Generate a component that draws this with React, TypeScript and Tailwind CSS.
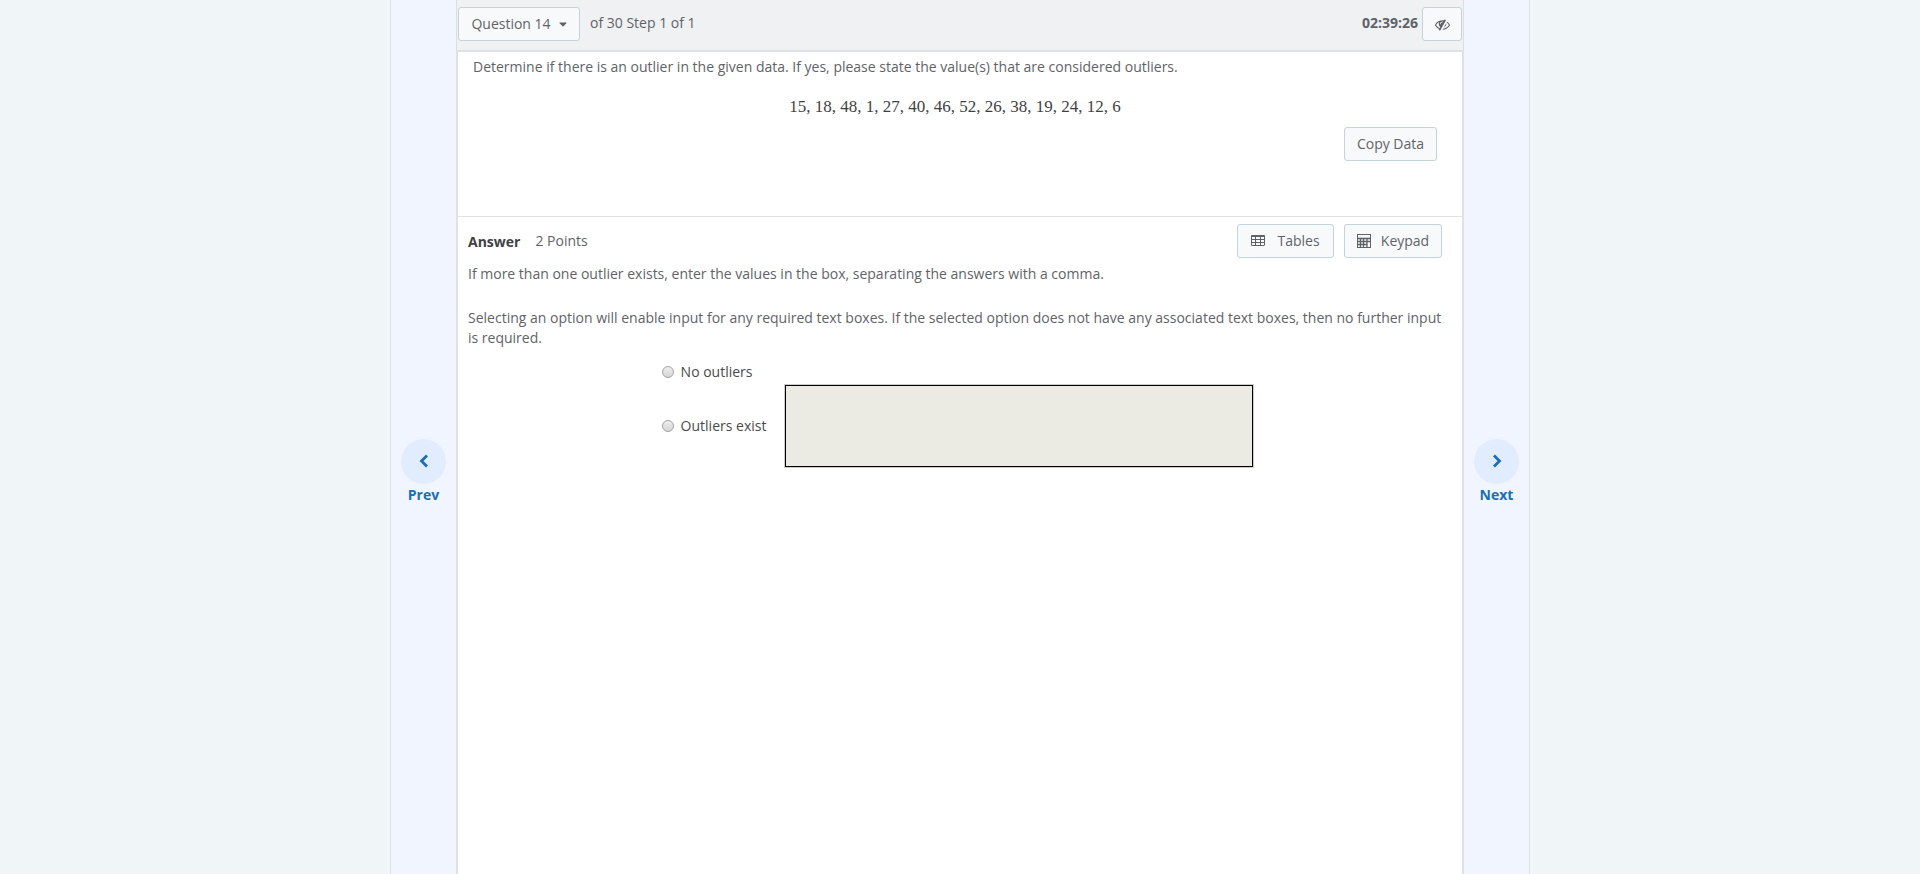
import React, { useState } from 'react';

const VALUES = [15, 18, 48, 1, 27, 40, 46, 52, 26, 38, 19, 24, 12, 6];

const EyeSlashIcon: React.FC = () => (
  <svg viewBox="0 0 1792 1792" className="mt-px h-[15px] w-[15px]" fill="currentColor" aria-hidden="true">
    <path d="M555 1335l78-141q-87-63-136-159t-49-203q0-121 61-225-229 117-381 353 167 258 427 375zm389-759q0-20-14-34t-34-14q-125 0-214.5 89.5t-89.5 214.5q0 20 14 34t34 14 34-14 14-34q0-86 61-147t147-61q20 0 34-14t14-34zm363-191q0 7-1 9-106 189-316 567t-315 566l-49 89q-10 16-28 16-12 0-134-70-16-10-16-28 0-12 44-87-143-65-263.5-173t-208.5-245q-20-31-20-69t20-69q153-235 380-371t496-136q89 0 180 17l54-97q10-16 28-16 5 0 18 6t31 15.5 33 18.5 31.5 18.5 19.5 11.5q16 10 16 27zm37 447q0 139-79 253.5t-209 164.5l280-502q8 45 8 84zm448 128q0 35-20 69-39 64-109 145-150 172-347.5 267t-419.5 95l74-132q212-18 392.5-137t301.5-307q-115-179-282-294l63-112q95 64 182.5 153t144.5 184q20 34 20 69z" />
  </svg>
);

const TableIcon: React.FC = () => (
  <svg viewBox="0 0 14 14" className="h-3.5 w-3.5" fill="none" stroke="currentColor" aria-hidden="true">
    <rect x="0.5" y="1.5" width="13" height="10" rx="0.5" />
    <path d="M0.5 2h13" strokeWidth="2" />
    <path d="M0.5 5.5h13M0.5 8.5h13M4.5 2v10M9.5 2v10" />
  </svg>
);

const KeypadIcon: React.FC = () => (
  <svg viewBox="0 0 14 14" className="h-3.5 w-3.5" fill="none" stroke="currentColor" aria-hidden="true">
    <rect x="0.5" y="0.5" width="13" height="13" />
    <path d="M0 4.5h14" strokeWidth="1.6" />
    <path d="M1 7.5h12M1 10.5h9M3.5 5v9M6.5 5v9M10 5v9" strokeWidth="1.3" />
  </svg>
);

interface ToolButtonProps {
  label?: string;
  ariaLabel?: string;
  className?: string;
  children?: React.ReactNode;
}

const ToolButton: React.FC<ToolButtonProps> = ({ label, ariaLabel, className = '', children }) => (
  <button
    type="button"
    aria-label={ariaLabel}
    className={`flex h-[34px] items-center justify-center rounded-[3px] border border-[#c3d3da] bg-[#f8f9fb] text-[#5f6368] ${className}`}
  >
    {children}
    {label}
  </button>
);

interface StepNavProps {
  label: string;
  direction: 'prev' | 'next';
}

const StepNav: React.FC<StepNavProps> = ({ label, direction }) => (
  <nav className="flex w-[65px] shrink-0 justify-center bg-[#f1f5ff]">
    <button type="button" className="mt-[439px] flex h-16 flex-col items-center font-bold text-[#1a6fb4]">
      <span className="flex h-[45px] w-[45px] shrink-0 items-center justify-center rounded-full bg-[#e1edff]">
        <svg viewBox="0 0 14 14" className="mb-0.5 h-3.5 w-3.5" fill="none" stroke="currentColor" strokeWidth="2.8" aria-hidden="true">
          <path d={direction === 'prev' ? 'M10 1.5L4.5 7l5.500 5.500' : 'M4 1.5L9.5 7L4 12.5'} />
        </svg>
      </span>
      <span className="leading-[22px]">{label}</span>
    </button>
  </nav>
);

interface OptionProps {
  id: string;
  label: string;
  checked: boolean;
  onSelect: () => void;
}

const Option: React.FC<OptionProps> = ({ id, label, checked, onSelect }) => (
  <label htmlFor={id} className="flex items-center gap-[7px] whitespace-nowrap text-[#4a4a4a]">
    <input
      id={id}
      type="radio"
      name="outliers"
      checked={checked}
      onChange={onSelect}
      className="h-3 w-3 appearance-none rounded-full border border-[#a3a3a3] bg-linear-to-b from-[#eeeeee] to-[#d6d6d6] checked:border-4 checked:border-[#555555]"
    />
    {label}
  </label>
);

const App: React.FC = () => {
  const [choice, setChoice] = useState('');

  return (
    <div className="min-h-screen bg-[#f0f5f8] font-['Open_Sans',sans-serif] text-sm text-[#5f6368]">
      <div className="mx-auto flex min-h-screen max-w-[1140px] border-x border-[#dcdfe2]">
        <StepNav label="Prev" direction="prev" />

        <main className="flex min-w-0 flex-1 flex-col">
          <header className="flex h-[50px] items-start border-x border-[#dcdfe2] bg-[#eff1f3] px-px pt-[7px]">
            <ToolButton label="Question 14" className="w-[122px] gap-2">
              <svg viewBox="0 0 8 5" className="order-last h-[5px] w-2" fill="currentColor" aria-hidden="true">
                <path d="M0.6 0.5h6.8q0.5 0.3 0 0.8L4.5 4.3q-0.5 0.4-1 0L0.6 1.3q-0.5-0.5 0-0.8z" />
              </svg>
            </ToolButton>
            <span className="ml-2.5 leading-8">of 30 Step 1 of 1</span>
            <span className="ml-auto mr-1 font-bold leading-8">02:39:26</span>
            <ToolButton ariaLabel="Hide timer" className="w-10">
              <EyeSlashIcon />
            </ToolButton>
          </header>

          <div className="flex-1 border-2 border-b-0 border-[#e0e1e1] bg-white">
            <section className="h-[165px] border-b border-[#e0e1e1] pt-[5px]">
              <p className="px-[15px] leading-5">
                Determine if there is an outlier in the given data. If yes, please state the value(s) that are
                considered outliers.
              </p>
              <p className="mt-5 pr-2.5 text-center font-['Liberation_Serif',serif] text-[17px] leading-5 text-[#3f4245]">
                {VALUES.join(', ')}
              </p>
              <div className="mt-2.5 flex justify-end pr-[25px]">
                <ToolButton label="Copy Data" className="w-[93px]" />
              </div>
            </section>

            <section className="pl-2.5 pr-5">
              <div className="flex items-center pt-[7px]">
                <h2 className="pt-px font-bold text-[#3f4245]">Answer</h2>
                <span className="ml-[15px]">2 Points</span>
                <ToolButton label="Tables" className="ml-auto w-[97px] gap-3">
                  <TableIcon />
                </ToolButton>
                <ToolButton label="Keypad" className="ml-2.5 w-[98px] gap-2.5">
                  <KeypadIcon />
                </ToolButton>
              </div>

              <p className="mt-1.5 leading-5">
                If more than one outlier exists, enter the values in the box, separating the answers with a comma.
              </p>
              <p className="mt-6 leading-5">
                Selecting an option will enable input for any required text boxes. If the selected option does not have
                any associated text boxes, then no further input is required.
              </p>

              <div className="mx-auto mt-3.5 grid w-fit grid-cols-[auto_470px] gap-x-[18px] gap-y-0.5 pl-1.5">
                <div className="leading-5">
                  <Option
                    id="no-outliers"
                    label="No outliers"
                    checked={choice === 'none'}
                    onSelect={() => setChoice('none')}
                  />
                </div>
                <div />
                <div className="flex items-center">
                  <Option
                    id="outliers-exist"
                    label="Outliers exist"
                    checked={choice === 'exist'}
                    onSelect={() => setChoice('exist')}
                  />
                </div>
                <div className="border border-[#cccccc]">
                  <input
                    type="text"
                    aria-label="Outlier values"
                    disabled={choice !== 'exist'}
                    className="block h-[82px] w-full border border-black px-2 enabled:bg-white disabled:bg-[#ebebe4]"
                  />
                </div>
              </div>
            </section>
          </div>
        </main>

        <StepNav label="Next" direction="next" />
      </div>
    </div>
  );
};

export default App;
